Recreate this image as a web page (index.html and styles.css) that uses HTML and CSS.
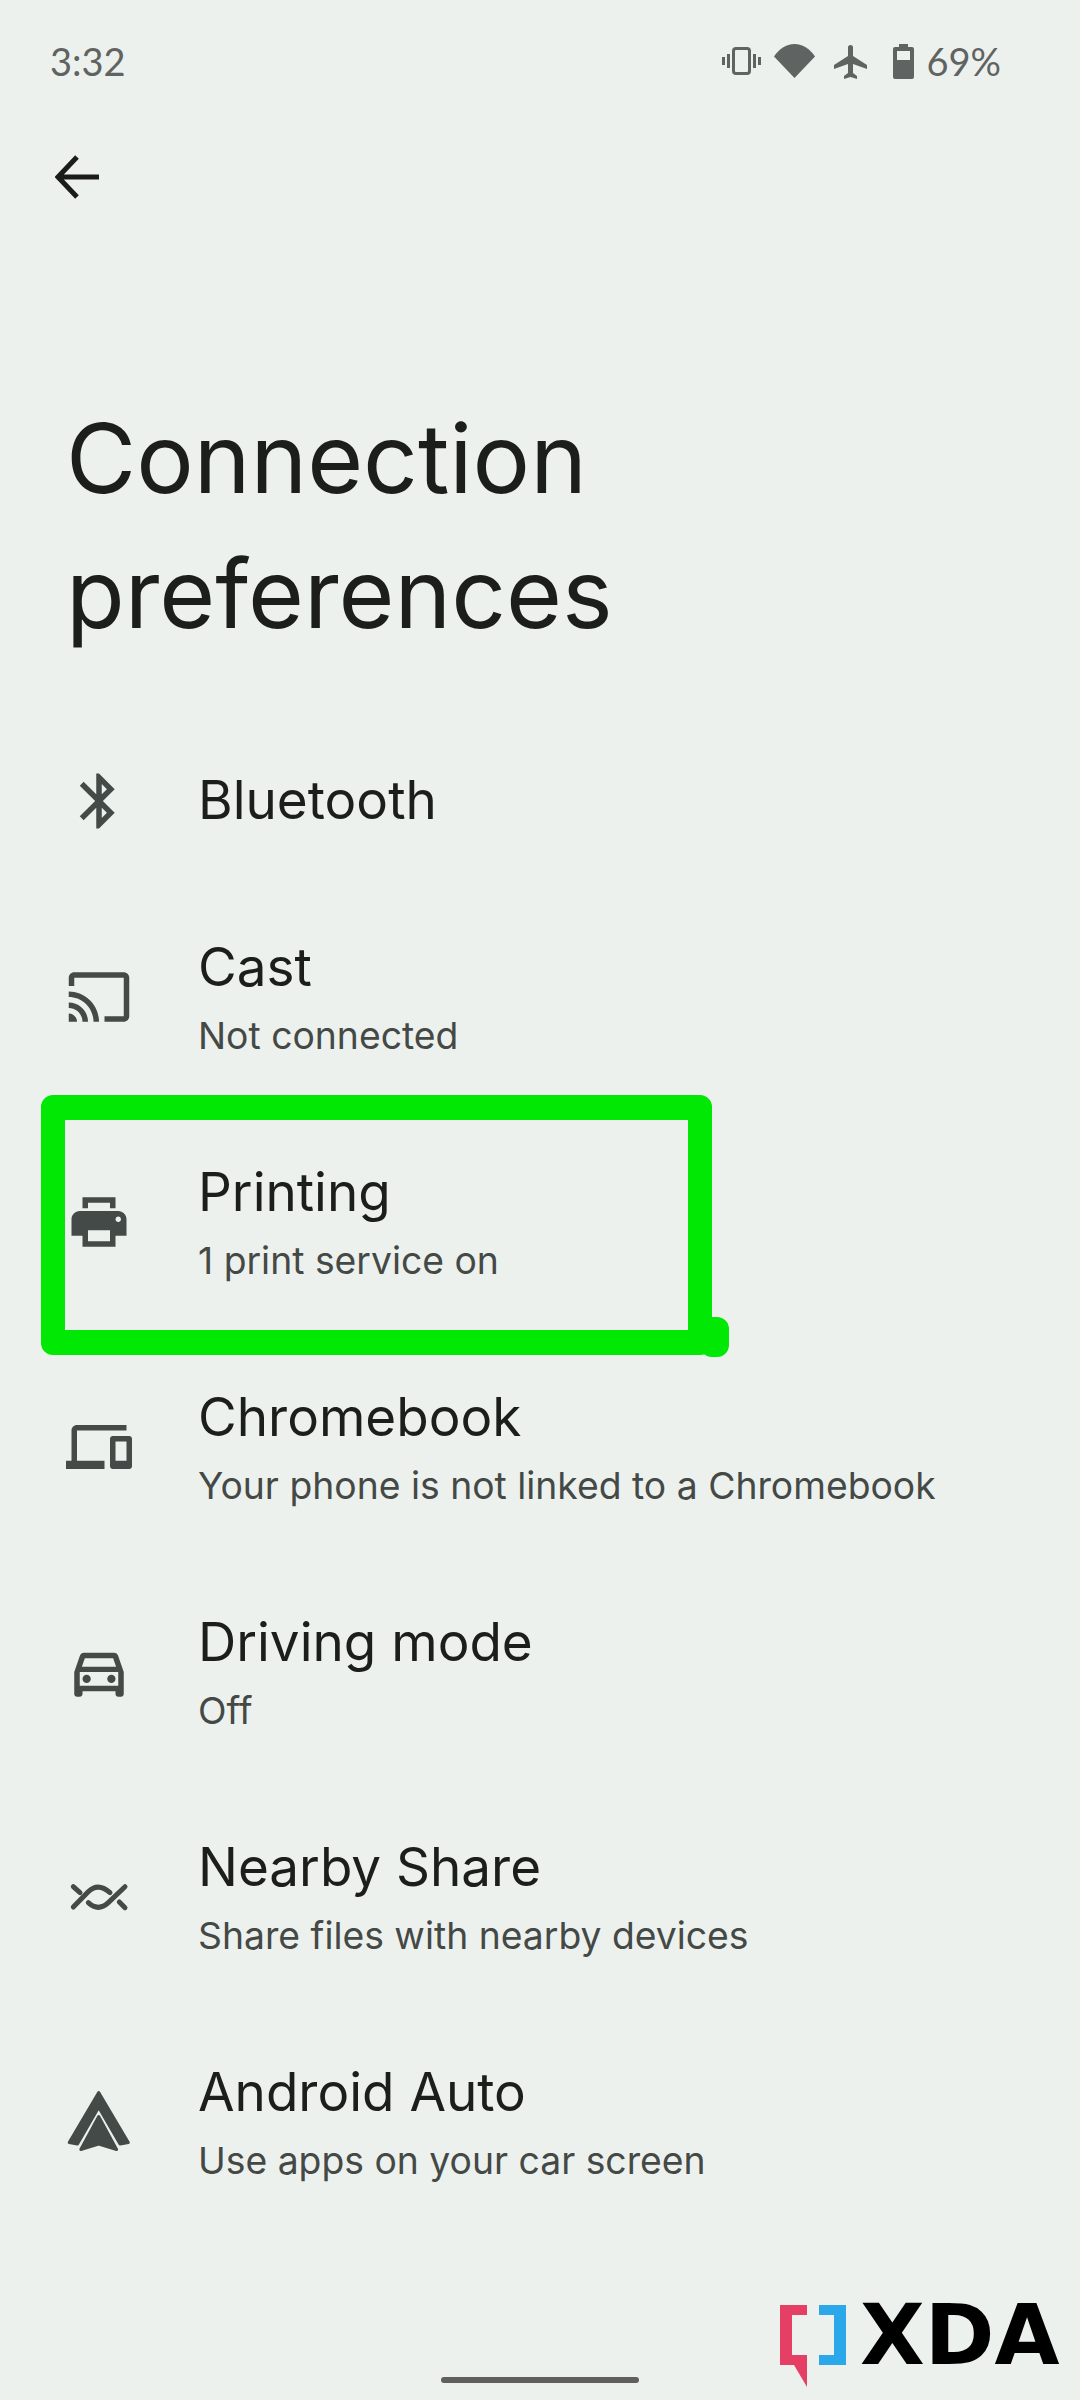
FILE: index.html
```html
<!DOCTYPE html>
<html lang="en">
<head>
    <meta charset="UTF-8">
    <meta name="viewport" content="width=device-width, initial-scale=1.0">
    <title>Connection preferences</title>
    <link rel="stylesheet" href="styles.css">
</head>
<body>
    <div class="screen">
        <div class="status-bar">
            <span class="clock">3:32</span>
            <div class="status-icons">
                <svg class="ic-vibrate" width="39" height="28" viewBox="0 0 39 28" fill="none" stroke="#5f6361">
                    <rect x="11.500" y="1.500" width="16" height="25" rx="2.500" stroke-width="3"/>
                    <path d="M6.500 7v14M1.500 10v8M32.500 7v14M37.500 10v8" stroke-width="3"/>
                </svg>
                <svg class="ic-wifi" width="41" height="34" viewBox="0 0 41 34" fill="#5f6361">
                    <path d="M0 12.500C5 5 12 0 20.500 0S36 5 41 12.500L20.500 34z"/>
                </svg>
                <svg class="ic-plane" width="33" height="35" viewBox="0 0 33 35" fill="#5f6361">
                    <path d="M14 3.500a2.500 2.500 0 0 1 5 0V12l14 9v4l-14-5v9l4 3v3l-6.500-2L10 35v-3l4-3v-9L0 25v-4l14-9z"/>
                </svg>
                <svg class="ic-battery" width="21" height="35" viewBox="0 0 21 35" fill="#5f6361">
                    <path fill-rule="evenodd" d="M6 0h9v3h4a2 2 0 0 1 2 2v28a2 2 0 0 1-2 2H2a2 2 0 0 1-2-2V5a2 2 0 0 1 2-2h4zM4 7v9h13V7z"/>
                </svg>
                <span class="battery-text">69%</span>
            </div>
        </div>

        <div class="top-bar">
            <svg width="44" height="44" viewBox="0 0 44 44" fill="none" stroke="#1b1c1a" stroke-width="5">
                <path d="M44 22H4M22 2L3 22l19 20"/>
            </svg>
        </div>

        <h1 class="page-title">Connection preferences</h1>

        <div class="list">
            <div class="row row-single">
                <svg class="row-icon" viewBox="0 0 24 24"><path d="M17.710 7.710L12 2h-1v7.590L6.410 5 5 6.410 10.590 12 5 17.590 6.410 19 11 14.410V22h1l5.710-5.710-4.300-4.290 4.300-4.290zM13 5.830l1.880 1.880L13 9.590V5.830zm1.880 10.460L13 18.170v-3.760l1.880 1.880z"/></svg>
                <div class="row-text">
                    <div class="row-title">Bluetooth</div>
                </div>
            </div>

            <div class="row">
                <svg class="row-icon" viewBox="0 0 24 24"><path d="M21 3H3c-1.100 0-2 .9-2 2v3h2V5h18v14h-7v2h7c1.100 0 2-.9 2-2V5c0-1.100-.9-2-2-2zM1 18v3h3c0-1.660-1.340-3-3-3zm0-4v2c2.760 0 5 2.240 5 5h2c0-3.870-3.130-7-7-7zm0-4v2c4.970 0 9 4.030 9 9h2c0-6.080-4.930-11-11-11z"/></svg>
                <div class="row-text">
                    <div class="row-title">Cast</div>
                    <div class="row-sub">Not connected</div>
                </div>
            </div>

            <div class="row">
                <svg class="row-icon" viewBox="0 0 24 24"><path d="M19 8H5c-1.660 0-3 1.340-3 3v6h4v4h12v-4h4v-6c0-1.660-1.340-3-3-3zm-3 11H8v-4h8v4zm3-7c-.55 0-1-.45-1-1s.45-1 1-1 1 .45 1 1-.45 1-1 1zM18 3H6v4h2V5h8v2h2z"/></svg>
                <div class="row-text">
                    <div class="row-title">Printing</div>
                    <div class="row-sub">1 print service on</div>
                </div>
                <div class="highlight"><div class="highlight-end"></div></div>
            </div>

            <div class="row">
                <svg class="row-icon" viewBox="0 0 24 24"><path d="M4 6h18V4H4c-1.100 0-2 .9-2 2v11H0v3h14v-3H4V6zm19 2h-6c-.55 0-1 .45-1 1v10c0 .55.45 1 1 1h6c.55 0 1-.45 1-1V9c0-.55-.45-1-1-1zm-1 9h-4v-7h4v7z"/></svg>
                <div class="row-text">
                    <div class="row-title">Chromebook</div>
                    <div class="row-sub">Your phone is not linked to a Chromebook</div>
                </div>
            </div>

            <div class="row">
                <svg class="row-icon" viewBox="0 0 24 24"><path d="M18.920 6.010C18.720 5.420 18.160 5 17.500 5h-11c-.66 0-1.210.42-1.420 1.010L3 12v8c0 .55.45 1 1 1h1c.55 0 1-.45 1-1v-1h12v1c0 .55.45 1 1 1h1c.55 0 1-.45 1-1v-8l-2.080-5.990zM6.850 7h10.290l1.080 3.110H5.770L6.850 7zM19 17H5v-5h14v5z"/><circle cx="7.500" cy="14.500" r="1.500"/><circle cx="16.500" cy="14.500" r="1.500"/></svg>
                <div class="row-text">
                    <div class="row-title">Driving mode</div>
                    <div class="row-sub">Off</div>
                </div>
            </div>

            <div class="row">
                <svg class="row-icon icon-line" viewBox="0 0 66 66">
                    <path d="M7.300 22.700L14 28.700M7.300 43L22 28Q32 18 44 28.700M22.300 38.700Q32.300 48 42.300 38.700L59 22.700M53.300 38L59 43.700"/>
                </svg>
                <div class="row-text">
                    <div class="row-title">Nearby Share</div>
                    <div class="row-sub">Share files with nearby devices</div>
                </div>
            </div>

            <div class="row">
                <svg class="row-icon icon-auto" viewBox="0 0 66 66">
                    <path d="M32.700 3.500L3.200 53.500L11.500 55L32.700 18.300L54 55L62.300 53.500z"/>
                    <path d="M32.700 27.500L14.800 60.500L32.700 55L50.600 60.500z"/>
                </svg>
                <div class="row-text">
                    <div class="row-title">Android Auto</div>
                    <div class="row-sub">Use apps on your car screen</div>
                </div>
            </div>
        </div>

        <div class="home-bar"></div>

        <div class="xda-logo">
            <svg width="66" height="82" viewBox="0 0 66 82">
                <path fill="#e63f66" d="M0 0h27v10H12v40h15v32L14 60H0z"/>
                <path fill="#2aa8ea" d="M39 0h27v60H39V50h15V10H39z"/>
            </svg>
            <span class="xda-text">XDA</span>
        </div>
    </div>
</body>
</html>
```
FILE: styles.css
```css
body {
    margin: 0;
    background: #edf1ee;
    font-family: Inter, "Liberation Sans", sans-serif;
}
.screen {
    position: relative;
    width: 1080px;
    height: 2400px;
    overflow: hidden;
}
.status-bar {
    display: flex;
    justify-content: space-between;
    align-items: center;
    height: 122px;
    padding: 0 79px 0 50px;
    font-family: Lato, sans-serif;
    font-size: 38px;
    color: #5f6361;
}
.status-icons {
    display: flex;
    align-items: center;
}
.ic-wifi { margin-left: 13px; }
.ic-plane { margin-left: 19px; }
.ic-battery { margin-left: 26px; }
.battery-text { margin-left: 12px; }
.top-bar {
    display: flex;
    align-items: center;
    height: 110px;
    padding-left: 55px;
}
.page-title {
    width: 700px;
    margin: 159px 0 55px 66px;
    font-size: 96px;
    font-weight: 400;
    line-height: 135px;
    color: #1b1e1b;
}
.row {
    position: relative;
    display: flex;
    align-items: center;
    gap: 66px;
    padding: 50px 0 38px 66px;
}
.row-single {
    padding-bottom: 48px;
}
.row-icon {
    flex: none;
    width: 66px;
    height: 66px;
    margin-top: -10px;
    fill: #444a48;
}
.row-single .row-icon {
    margin-top: 0;
}
.icon-line {
    fill: none;
    stroke: #444a48;
    stroke-width: 5;
    stroke-linecap: round;
}
.icon-auto {
    stroke: #444a48;
    stroke-width: 3;
    stroke-linejoin: round;
}
.row-title {
    font-size: 53px;
    line-height: 69px;
    color: #1b1e1b;
}
.row-sub {
    font-size: 37.3px;
    line-height: 68px;
    color: #444946;
}
.highlight {
    position: absolute;
    left: 41px;
    top: -13px;
    box-sizing: border-box;
    width: 671px;
    height: 260px;
    border: solid #00e804;
    border-width: 25px 24px;
    border-radius: 12px;
}
.highlight-end {
    position: absolute;
    left: 635px;
    top: 197px;
    width: 29px;
    height: 40px;
    background: #00e804;
    border-radius: 12px;
}
.home-bar {
    position: absolute;
    left: 441px;
    top: 2377px;
    width: 198px;
    height: 6px;
    background: #5f605c;
    border-radius: 3px;
}
.xda-logo {
    position: absolute;
    left: 780px;
    top: 2305px;
    display: flex;
    align-items: flex-start;
    gap: 14px;
}
.xda-text {
    font-family: "DejaVu Sans", sans-serif;
    font-weight: 700;
    font-size: 84px;
    line-height: 61px;
    color: #000;
}
```
